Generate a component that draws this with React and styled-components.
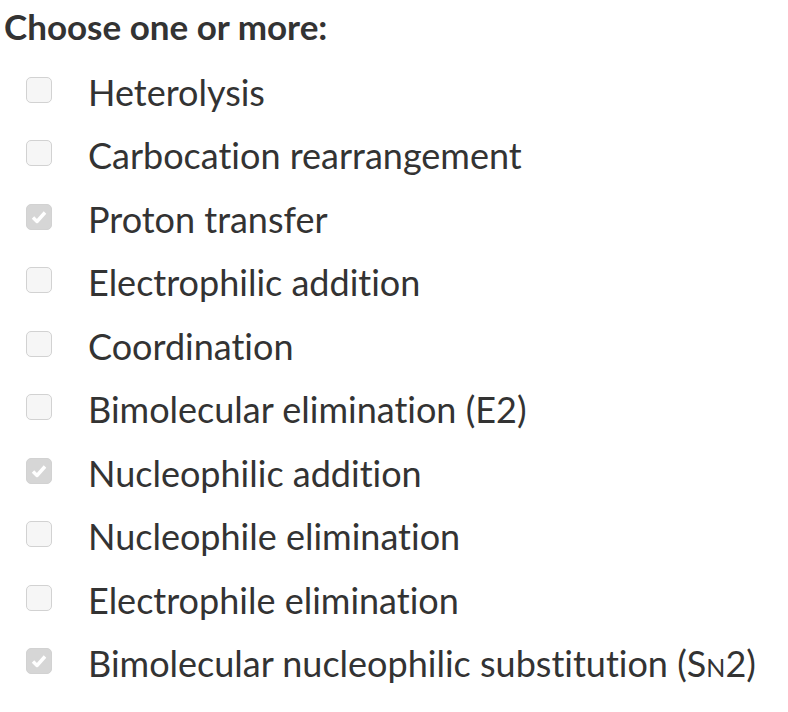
import styled, { createGlobalStyle } from 'styled-components'

const GlobalStyle = createGlobalStyle`
  body {
    margin: 0;
    background: #fff;
    font-family: Lato, "Liberation Sans", sans-serif;
    font-variant-ligatures: none;
    color: #333;
  }
`;

const Wrapper = styled.div`
  padding: 2px 0 0 4px;
`;

const Prompt = styled.div`
  font-size: 35px;
  font-weight: 700;
  line-height: 48px;
  color: #333;
`;

const List = styled.div`
  display: flex;
  flex-direction: column;
  padding: 8px 0 0 22px;
`;

const Option = styled.label`
  display: flex;
  align-items: center;
  gap: 36px;
  height: 63.5px;
  font-size: 36px;
  color: #333;
`;

const Text = styled.span`
  padding-top: 4px;
`;

const Box = styled.span`
  flex: none;
  width: 24px;
  height: 24px;
  border: 1px solid #d2d2d2;
  border-radius: 5px;
  background: ${(p) => (p.checked ? '#d6d6d6' : '#f6f6f6')};
  display: flex;
  align-items: center;
  justify-content: center;
`;

const SmallCap = styled.span`
  font-variant: small-caps;
`;

const Check = () => (
  <svg width="18" height="18" viewBox="0 0 18 18">
    <path d="M3 9.5 L7 13.5 L15 4.5" fill="none" stroke="#fff" strokeWidth="3.4" strokeLinejoin="round" />
  </svg>
);

const options = [
  { label: 'Heterolysis' },
  { label: 'Carbocation rearrangement' },
  { label: 'Proton transfer', checked: true },
  { label: 'Electrophilic addition' },
  { label: 'Coordination' },
  { label: 'Bimolecular elimination (E2)' },
  { label: 'Nucleophilic addition', checked: true },
  { label: 'Nucleophile elimination' },
  { label: 'Electrophile elimination' },
  {
    label: (
      <>
        Bimolecular nucleophilic substitution (S<SmallCap>n</SmallCap>2)
      </>
    ),
    checked: true,
  },
];

export default function App() {
  return (
    <Wrapper>
      <GlobalStyle />
      <Prompt>Choose one or more:</Prompt>
      <List>
        {options.map((o, i) => (
          <Option key={i}>
            <Box checked={o.checked}>{o.checked && <Check />}</Box>
            <Text>{o.label}</Text>
          </Option>
        ))}
      </List>
    </Wrapper>
  );
}
